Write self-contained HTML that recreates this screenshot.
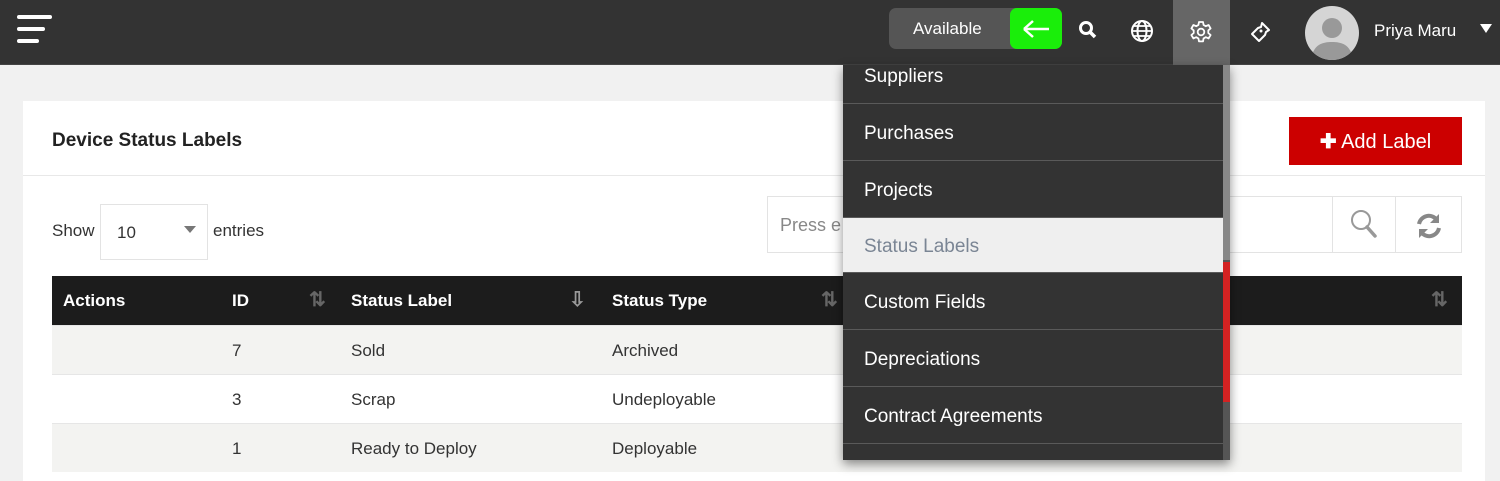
<!DOCTYPE html>
<html><head><meta charset="utf-8"><style>
*{margin:0;padding:0;box-sizing:border-box}
body{width:1500px;height:474px;overflow:hidden;background:#f1f1f1;font-family:"Liberation Sans",sans-serif;position:relative;color:#333}
.abs{position:absolute}
.top{left:0;top:0;width:1500px;height:65px;background:#333;border-bottom:1px solid #444}
.bar{background:#fff;height:4px;border-radius:2px;left:17px}
.panel{left:23px;top:101px;width:1462px;height:380px;background:#fff}
.th{top:276px;left:52px;width:1410px;height:49px;background:#1c1c1c;color:#fff;font-weight:bold;font-size:17px}
.th span,.row span{position:absolute;top:15px}
.row{left:52px;width:1410px;height:49px;font-size:17px;color:#333;border-top:1px solid #e6e6e6}
.menu{left:843px;top:65px;width:387px;height:395px;background:#333;box-shadow:0 4px 10px rgba(0,0,0,.45)}
.mi{position:absolute;left:0;width:380px;height:57px;border-bottom:1px solid #5a5a5a;color:#fff;font-size:19px;padding-left:21px;line-height:60px}
.th .sort{color:#666;font-size:20px;font-weight:bold;top:11px}
</style></head><body>
<div class="abs top"></div>
<div class="abs bar" style="top:15px;width:35px"></div>
<div class="abs bar" style="top:27px;width:28px"></div>
<div class="abs bar" style="top:39px;width:22px"></div>
<div class="abs" style="left:889px;top:8px;width:173px;height:41px;background:#555;border-radius:7px"></div>
<div class="abs" style="left:913px;top:19px;color:#fff;font-size:17px">Available</div>
<div class="abs" style="left:1010px;top:8px;width:52px;height:41px;background:#1aee0a;border-radius:7px"></div>
<svg class="abs" style="left:1020px;top:17px" width="32" height="24"><path d="M4 12H29M4 12L13 4M4 12L13 20" stroke="#fff" stroke-width="2.5" fill="none"/></svg>
<svg class="abs" style="left:1078px;top:20px" width="20" height="20"><circle cx="8" cy="8" r="5.5" stroke="#fff" stroke-width="3" fill="none"/><path d="M12 12L17 17" stroke="#fff" stroke-width="3.5"/></svg>
<svg class="abs" style="left:1130px;top:19px" width="24" height="24"><circle cx="12" cy="12" r="10" stroke="#fff" stroke-width="2" fill="none"/><ellipse cx="12" cy="12" rx="4.5" ry="10" stroke="#fff" stroke-width="2" fill="none"/><path d="M2 12H22M4 7H20M4 17H20" stroke="#fff" stroke-width="1.8"/></svg>
<div class="abs" style="left:1173px;top:0;width:57px;height:65px;background:#666"></div>
<svg class="abs" style="left:1189px;top:20px" width="24" height="24" viewBox="0 0 24 24"><path d="M10 2h4l.6 3 2.2 1.2 2.8-1.2 2 3.4-2.3 2 0 2.6 2.3 2-2 3.4-2.8-1.2-2.2 1.2-.6 3h-4l-.6-3-2.2-1.2-2.8 1.2-2-3.4 2.3-2v-2.6l-2.3-2 2-3.4 2.8 1.2L9.4 5z" stroke="#fff" stroke-width="1.8" fill="none" stroke-linejoin="round"/><circle cx="12" cy="12" r="3.3" stroke="#fff" stroke-width="1.8" fill="none"/></svg>
<svg class="abs" style="left:1248px;top:20px" width="24" height="24"><path d="M14 3l7 7-3 2-1 3-6 6-7-7 6-6 3-1z" stroke="#fff" stroke-width="2" fill="none" stroke-linejoin="round"/><circle cx="13" cy="11" r="1.5" fill="#fff"/></svg>
<div class="abs" style="left:1305px;top:6px;width:54px;height:54px;border-radius:50%;background:#d5d5d5;overflow:hidden">
<svg width="54" height="54"><circle cx="27" cy="22" r="10" fill="#999"/><path d="M6 54C8 38 18 36 27 36S46 38 48 54Z" fill="#999"/></svg></div>
<div class="abs" style="left:1374px;top:21px;color:#fff;font-size:17px">Priya Maru</div>
<div class="abs" style="left:1480px;top:24px;border-left:6px solid transparent;border-right:6px solid transparent;border-top:9px solid #fff"></div>

<div class="abs panel"></div>
<div class="abs" style="left:52px;top:130px;font-size:19px;font-weight:bold;color:#222">Device Status Labels</div>
<div class="abs" style="left:23px;top:175px;width:1462px;height:1px;background:#e8e8e8"></div>
<div class="abs" style="left:1289px;top:117px;width:173px;height:48px;background:#cc0000;color:#fff;font-size:20px;line-height:50px;text-align:center"><b>✚</b> Add Label</div>
<div class="abs" style="left:52px;top:221px;font-size:17px">Show</div>
<div class="abs" style="left:100px;top:204px;width:108px;height:56px;border:1px solid #e3e3e3"></div>
<div class="abs" style="left:117px;top:223px;font-size:17px">10</div>
<div class="abs" style="left:184px;top:226px;border-left:6px solid transparent;border-right:6px solid transparent;border-top:7px solid #777"></div>
<div class="abs" style="left:213px;top:221px;font-size:17px">entries</div>
<div class="abs" style="left:767px;top:196px;width:695px;height:57px;border:1px solid #e3e3e3"></div>
<div class="abs" style="left:1332px;top:196px;width:1px;height:57px;background:#e3e3e3"></div>
<div class="abs" style="left:1395px;top:196px;width:1px;height:57px;background:#e3e3e3"></div>
<div class="abs" style="left:780px;top:215px;font-size:18px;color:#888">Press e</div>
<svg class="abs" style="left:1347px;top:207px" width="36" height="34"><circle cx="14" cy="13" r="9" stroke="#999" stroke-width="2" fill="none"/><path d="M20 20l8 9" stroke="#999" stroke-width="3.5" stroke-linecap="round"/></svg>
<svg class="abs" style="left:1415px;top:212px" width="28" height="28"><path d="M4 12A10 10 0 0 1 22 8M24 16A10 10 0 0 1 6 20" stroke="#888" stroke-width="4" fill="none"/><path d="M24 2v9h-9zM4 26v-9h9z" fill="#888"/></svg>

<div class="abs th"><span style="left:11px">Actions</span><span style="left:180px">ID</span><span class="sort" style="left:257px">⇅</span><span style="left:299px">Status Label</span><span class="sort" style="left:517px;color:#999">⇩</span><span style="left:560px">Status Type</span><span class="sort" style="left:769px">⇅</span><span class="sort" style="left:1379px">⇅</span></div>
<div class="abs row" style="top:325px;background:#f3f3f1"><span style="left:180px">7</span><span style="left:299px">Sold</span><span style="left:560px">Archived</span></div>
<div class="abs row" style="top:374px;background:#fff"><span style="left:180px">3</span><span style="left:299px">Scrap</span><span style="left:560px">Undeployable</span></div>
<div class="abs row" style="top:423px;background:#f3f3f1"><span style="left:180px">1</span><span style="left:299px">Ready to Deploy</span><span style="left:560px">Deployable</span></div>

<div class="abs menu">
<div class="mi" style="top:-18px">Suppliers</div>
<div class="mi" style="top:39px">Purchases</div>
<div class="mi" style="top:96px">Projects</div>
<div class="mi" style="top:153px;background:#efefef;color:#7a8594;height:55px;line-height:58px">Status Labels</div>
<div class="mi" style="top:208px">Custom Fields</div>
<div class="mi" style="top:265px">Depreciations</div>
<div class="mi" style="top:322px">Contract Agreements</div>
<div style="position:absolute;left:380px;top:0;width:7px;height:395px;background:#555"></div>
<div style="position:absolute;left:380px;top:0;width:7px;height:195px;background:#888"></div>
<div style="position:absolute;left:380px;top:197px;width:7px;height:140px;background:#d32222"></div>
</div>
</body></html>
